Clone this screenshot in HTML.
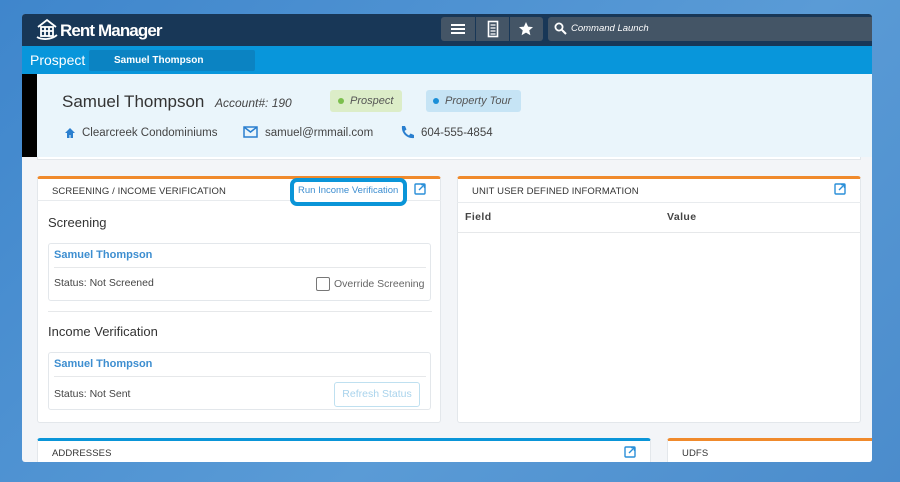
<!DOCTYPE html>
<html><head><style>
*{box-sizing:border-box;margin:0;padding:0}
body{width:900px;height:482px;overflow:hidden;background:linear-gradient(135deg,#3f86cc,#5a9bd6 60%,#4b8ccc);font-family:"Liberation Sans",sans-serif;position:relative}
.a{position:absolute}
.win{left:22px;top:14px;width:850px;height:448px;background:#f3f5f8;overflow:hidden;border-radius:3px}
.card{background:#fff;border:1px solid #e3e7eb;border-radius:3px}
.ht{font-size:9.5px;color:#333;letter-spacing:.1px}
.link{color:#3d8ed0;font-weight:bold;font-size:11px}
.t11{font-size:11px;color:#444}
</style></head><body>
<div class="a win">
 <div class="a" style="left:0;top:0;width:850px;height:32px;background:#183757"></div>
 <svg class="a" style="left:13px;top:3px" width="24" height="24" viewBox="0 0 24 24" fill="none" stroke="#fff" stroke-width="1.8"><path d="M3 10 L12 3 L21 10"/><rect x="6" y="10" width="12" height="9"/><path d="M6 14h12M10 10v9M14 10v9"/><path d="M2 20c5 3 14 3 20-2" /></svg>
 <div class="a" style="left:38px;top:7px;color:#fff;font-weight:bold;font-size:17px;letter-spacing:-.9px">Rent Manager</div>
 <div class="a" style="left:419px;top:3px;width:102px;height:24px;background:#445566;border-radius:3px"></div>
 <div class="a" style="left:453px;top:3px;width:1px;height:24px;background:#183757"></div>
 <div class="a" style="left:487px;top:3px;width:1px;height:24px;background:#183757"></div>
 <svg class="a" style="left:428px;top:8px" width="16" height="14"><path d="M1 3h14M1 7h14M1 11h14" stroke="#fff" stroke-width="2"/></svg>
 <svg class="a" style="left:465px;top:6px" width="12" height="18"><rect x="1.5" y="1.5" width="9" height="15" fill="none" stroke="#fff" stroke-width="1.6"/><path d="M3.5 5h5M3.5 8h5M3.5 11h5M3.5 14h5" stroke="#fff" stroke-width="1.2"/></svg>
 <svg class="a" style="left:496px;top:7px" width="16" height="16" viewBox="0 0 24 24"><path d="M12 1.5l3.1 7 7.4.6-5.6 4.9 1.7 7.3L12 17.4 5.4 21.3l1.7-7.3L1.5 9.1l7.4-.6z" fill="#fff"/></svg>
 <div class="a" style="left:526px;top:3px;width:324px;height:24px;background:#445566;border-radius:3px 0 0 3px"></div>
 <svg class="a" style="left:532px;top:8px" width="13" height="13"><circle cx="5" cy="5" r="3.6" fill="none" stroke="#fff" stroke-width="1.8"/><path d="M8 8l4 4" stroke="#fff" stroke-width="2"/></svg>
 <div class="a" style="left:549px;top:9px;color:#fff;font-size:9.5px;font-style:italic">Command Launch</div>
 <div class="a" style="left:0;top:32px;width:850px;height:28px;background:#0896db"></div>
 <div class="a" style="left:8px;top:38px;color:#fff;font-size:14px">Prospect</div>
 <div class="a" style="left:67px;top:36px;width:166px;height:21px;background:#0b83c2;border-radius:2px"></div>
 <div class="a" style="left:92px;top:41px;color:#fff;font-size:10px;font-weight:bold">Samuel Thompson</div>
 <div class="a" style="left:0;top:60px;width:850px;height:83px;background:#eaf5fb"></div>
 <div class="a" style="left:0;top:60px;width:15px;height:83px;background:#000"></div>
 <div class="a" style="left:40px;top:78px;color:#333;font-size:17px">Samuel Thompson</div>
 <div class="a" style="left:193px;top:82px;color:#444;font-size:12px;font-style:italic">Account#: 190</div>
 <div class="a" style="left:308px;top:76px;width:72px;height:22px;background:#dcedc8;border-radius:3px"></div>
 <div class="a" style="left:316px;top:84px;width:6px;height:6px;border-radius:50%;background:#7cbf4d"></div>
 <div class="a" style="left:328px;top:81px;color:#555;font-size:11px;font-style:italic">Prospect</div>
 <div class="a" style="left:404px;top:76px;width:95px;height:22px;background:#c6e4f5;border-radius:3px"></div>
 <div class="a" style="left:411px;top:84px;width:6px;height:6px;border-radius:50%;background:#1a8fd8"></div>
 <div class="a" style="left:423px;top:81px;color:#555;font-size:11px;font-style:italic">Property Tour</div>
 <svg class="a" style="left:42px;top:113px" width="12" height="12"><path d="M6 1L1 6h2v5h2.5V8h1v3H9V6h2z" fill="#2a7fcf"/></svg>
 <div class="a t11" style="left:60px;top:113px;font-size:11.5px">Clearcreek Condominiums</div>
 <svg class="a" style="left:221px;top:112px" width="15" height="12"><rect x="1" y="1" width="13" height="10" fill="none" stroke="#2a7fcf" stroke-width="1.5"/><path d="M1 1l6.5 5 6.5-5" fill="none" stroke="#2a7fcf" stroke-width="1.5"/></svg>
 <div class="a t11" style="left:243px;top:113px;font-size:11.5px">samuel@rmmail.com</div>
 <svg class="a" style="left:378px;top:111px" width="14" height="14"><path d="M2 1h3l1.5 3.5-2 1.5c1 2 2.5 3.5 4.5 4.5l1.5-2L14 10v3c-7 1-13-5-12-12z" fill="#2a7fcf"/></svg>
 <div class="a t11" style="left:399px;top:113px;font-size:11.5px">604-555-4854</div>
 <div class="a" style="left:15px;top:143px;width:824px;height:3px;border:1px solid #e3e7eb;border-top:0;background:#fff"></div>
 <!-- left card -->
 <div class="a card" style="left:15px;top:162px;width:404px;height:247px;border-top:3px solid #f08a2c"></div>
 <div class="a" style="left:15px;top:186px;width:404px;height:1px;background:#e8ebee"></div>
 <div class="a ht" style="left:30px;top:172px">SCREENING / INCOME VERIFICATION</div>
 <div class="a" style="left:268px;top:164px;width:117px;height:28px;border:4px solid #0a95d8;border-radius:7px;background:#fff"></div>
 <div class="a" style="left:276px;top:171px;color:#3d8ed0;font-size:9.5px">Run Income Verification</div>
 <svg class="a" style="left:392px;top:169px" width="12" height="12"><rect x="1" y="1" width="10" height="10" rx="1" fill="none" stroke="#2a8fd8" stroke-width="1.4"/><path d="M5 7l5-5M7 1.5h3.5V5" fill="none" stroke="#2a8fd8" stroke-width="1.4"/></svg>
 <div class="a" style="left:26px;top:201px;color:#333;font-size:13px">Screening</div>
 <div class="a card" style="left:26px;top:229px;width:383px;height:58px"></div>
 <div class="a link" style="left:32px;top:235px">Samuel Thompson</div>
 <div class="a" style="left:32px;top:253px;width:372px;height:1px;background:#e6e8ea"></div>
 <div class="a t11" style="left:32px;top:263px;font-size:10.5px">Status: Not Screened</div>
 <div class="a" style="left:294px;top:263px;width:14px;height:14px;border:1.5px solid #777;border-radius:2px"></div>
 <div class="a t11" style="left:312px;top:264px;font-size:10.5px;color:#666">Override Screening</div>
 <div class="a" style="left:26px;top:297px;width:384px;height:1px;background:#e6e8ea"></div>
 <div class="a" style="left:26px;top:310px;color:#333;font-size:13px">Income Verification</div>
 <div class="a card" style="left:26px;top:338px;width:383px;height:58px"></div>
 <div class="a link" style="left:32px;top:344px">Samuel Thompson</div>
 <div class="a" style="left:32px;top:362px;width:372px;height:1px;background:#e6e8ea"></div>
 <div class="a t11" style="left:32px;top:374px;font-size:10.5px">Status: Not Sent</div>
 <div class="a" style="left:312px;top:368px;width:86px;height:25px;border:1px solid #bfe0f0;border-radius:3px;color:#a9d3ec;font-size:10.5px;text-align:center;line-height:23px">Refresh Status</div>
 <!-- right card -->
 <div class="a card" style="left:435px;top:162px;width:404px;height:247px;border-top:3px solid #f08a2c"></div>
 <div class="a" style="left:435px;top:188px;width:404px;height:1px;background:#e8ebee"></div>
 <div class="a ht" style="left:450px;top:172px">UNIT USER DEFINED INFORMATION</div>
 <svg class="a" style="left:812px;top:169px" width="12" height="12"><rect x="1" y="1" width="10" height="10" rx="1" fill="none" stroke="#2a8fd8" stroke-width="1.4"/><path d="M5 7l5-5M7 1.5h3.5V5" fill="none" stroke="#2a8fd8" stroke-width="1.4"/></svg>
 <div class="a" style="left:443px;top:197px;color:#444;font-size:10.5px;font-weight:bold;letter-spacing:.4px">Field</div>
 <div class="a" style="left:645px;top:197px;color:#444;font-size:10.5px;font-weight:bold;letter-spacing:.4px">Value</div>
 <div class="a" style="left:435px;top:218px;width:404px;height:1px;background:#e6e8ea"></div>
 <!-- bottom -->
 <div class="a card" style="left:15px;top:424px;width:614px;height:40px;border-top:3px solid #0a95d8"></div>
 <div class="a ht" style="left:30px;top:434px">ADDRESSES</div>
 <svg class="a" style="left:602px;top:432px" width="12" height="12"><rect x="1" y="1" width="10" height="10" rx="1" fill="none" stroke="#2a8fd8" stroke-width="1.4"/><path d="M5 7l5-5M7 1.5h3.5V5" fill="none" stroke="#2a8fd8" stroke-width="1.4"/></svg>
 <div class="a card" style="left:645px;top:424px;width:210px;height:40px;border-top:3px solid #f08a2c"></div>
 <div class="a ht" style="left:660px;top:434px">UDFS</div>
</div>
</body></html>
